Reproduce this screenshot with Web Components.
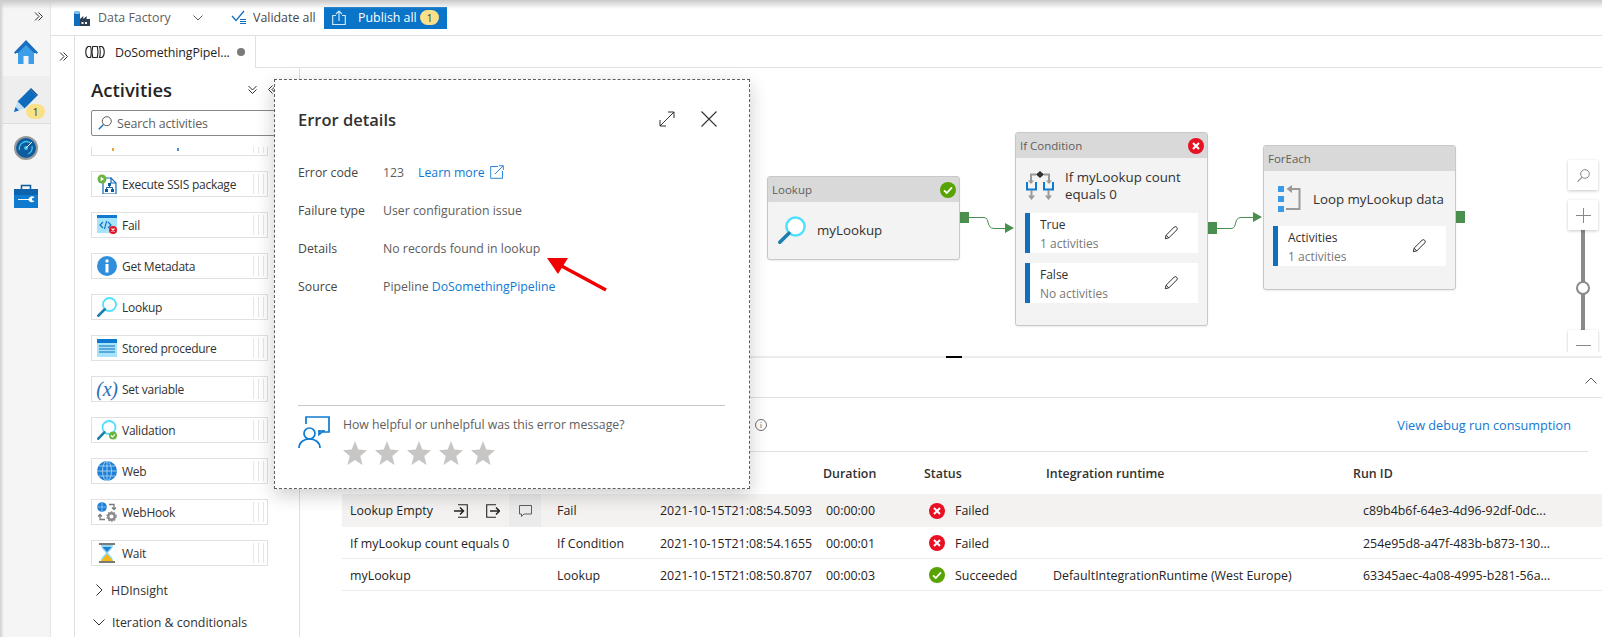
<!DOCTYPE html>
<html lang="en">
<head>
<meta charset="utf-8">
<title>Data Factory</title>
<style>
  html, body { margin: 0; height: 637px; overflow: hidden; background: #fff; }
  body { font-family: "Open Sans", "Noto Sans", sans-serif; font-size: 12.4px; color: #323130; }
</style>
</head>
<body>
<adf-app></adf-app>

<script>
const ICONS = {
  factory: [16, 16, `<path d="M0 2.5C0 .8 6 .8 6 2.5V16H0z" fill="#0f6cbd"/><ellipse cx="3" cy="2.5" rx="3" ry="1.6" fill="#7fc4f0"/><path d="M6 9l3.3-3v3l3.3-3v3H16v7H6z" fill="#2b3f55"/><path d="M7.5 12h2v2h-2zM11 12h2v2h-2z" fill="#fff"/>`],
  validate: [15, 15, `<path d="M1 6l4 4.5L13 1" fill="none" stroke="#0f6cbd" stroke-width="1.2"/><path d="M9 9.5h6M9 11.5h6M9 13.5h6" stroke="#0f6cbd" stroke-width="1.1"/>`],
  upload: [14, 15, `<path d="M4 5.5H.7v9h12.6v-9H10" fill="none" stroke="#cfe6f8" stroke-width="1.2"/><path d="M7 11V1M4 4l3-3 3 3" fill="none" stroke="#cfe6f8" stroke-width="1.2"/>`],
  home: [24, 24, `<path d="M4 12L12 4l8 8v12h-5.5v-8h-5v8H4z" fill="#3f9ee8"/><path d="M12 0L0 12.5l1.5 1.5L12 3.5 22.5 14l1.5-1.5z" fill="#1a6fbe"/><path d="M12 2L1 13l3 0 8-8 8 8h3z" fill="#1a6fbe"/>`],
  pencil: [24, 24, `<path d="M3.500 13.500L16 1l7 7L10.500 20.500z" fill="#0f6cbd"/><path d="M16 1l1-1 7 7-1 1z" fill="#0a4f8f"/><path d="M3.500 13.500l7 7L0 24z" fill="#bcdcf5"/><path d="M1.500 19l3.500 3.500L0 24z" fill="#0f6cbd"/>`],
  monitor: [24, 24, `<circle cx="12" cy="12" r="12" fill="#9a9a9a"/><circle cx="12" cy="12" r="10" fill="#0e5c9e"/><path d="M5.5 14a7 7 0 0 1 11-7M18 10a6.5 6.5 0 0 1-4 8" fill="none" stroke="#3ec6f2" stroke-width="1.3"/><circle cx="12" cy="12" r="2" fill="#3ec6f2"/><path d="M12 12l6-6" stroke="#fff" stroke-width="1"/>`],
  toolbox: [24, 24, `<path d="M7.5 5V1.5h9V5" fill="none" stroke="#0b5a9e" stroke-width="1.5"/><path d="M0 5h24v19H0z" fill="#0f7bd0"/><path d="M0 5h24v6H0z" fill="#0b64ad"/><path d="M4 15h10.5a3.5 3.5 0 0 1 6-1.5l-2.5.9v1.8l2.5.9a3.5 3.5 0 0 1-6-1.100H4z" fill="#fff"/>`],
  pipeline: [20, 14, `<g fill="none" stroke="#252423" stroke-width="1.1"><path d="M3 1.5h2.5c1 2 1 9 0 11H3c-3-2-3-9 0-11z"/><path d="M7.7 1.5h4.6c.8 3 .8 8 0 11H7.7c-.8-3-.8-8 0-11z"/><path d="M14.5 1.5H17c3 2 3 9 0 11h-2.5c1-2 1-9 0-11z"/></g>`],
  search: [14, 14, `<circle cx="8.8" cy="5.2" r="4.5" fill="none" stroke="#605e5c" stroke-width="1"/><path d="M5.5 8.5L.8 13.2" stroke="#0f6cbd" stroke-width="1.3"/>`],
  ssis: [20, 20, `<path d="M6 4h8l5 5v11H6z" fill="#fff" stroke="#0f6cbd" stroke-width="1.2"/><path d="M14 3.5V9h5" fill="none" stroke="#0f6cbd" stroke-width="1.2"/><path d="M11 9h3v3h-3zM8 15h3v3H8zM14 15h3v3h-3z" fill="#0b5a9e"/><path d="M12.5 12v1.5h-3V15M12.5 13.5h3V15" fill="none" stroke="#0b5a9e"/><circle cx="5" cy="5" r="4.5" fill="#6cb33f"/><path d="M3.7 2.8L7 5 3.7 7.2z" fill="#fff"/>`],
  fail: [20, 20, `<path d="M0 2h20v16H0z" fill="#a5e4fa"/><path d="M0 0h20v3H0z" fill="#0f7bd0"/><path d="M6 7l-3 3 3 3M11 7l3 3-3 3M9.7 6L7.5 14" fill="none" stroke="#0f6cbd" stroke-width="1.1"/><circle cx="16" cy="15" r="4" fill="#e81123"/><path d="M14.5 13.5l3 3m0-3l-3 3" stroke="#fff" stroke-width="1.1"/>`],
  info: [20, 20, `<circle cx="10" cy="10" r="10" fill="#2f8fdc"/><circle cx="10" cy="5" r="1.7" fill="#fff"/><path d="M8.5 8h3v8.5h-3z" fill="#fff"/>`],
  lookup: [20, 20, `<circle cx="12.5" cy="7.5" r="6.5" fill="#fff" stroke="#50e0ff" stroke-width="1.8"/><path d="M7.8 12.3L1.3 18.7" stroke="#1c7fae" stroke-width="2.6" stroke-linecap="round"/>`],
  stored: [20, 20, `<path d="M0 3h20v16H0z" fill="#a5e4fa"/><path d="M0 1h20v4H0z" fill="#0f7bd0"/><path d="M2 8h16M2 11h16M2 14h16" stroke="#0f6cbd" stroke-width="1.1"/>`],
  validation: [20, 20, `<circle cx="12" cy="7.5" r="6.5" fill="#fff" stroke="#50e0ff" stroke-width="1.8"/><path d="M7.3 12.3L1.3 18.7" stroke="#1c7fae" stroke-width="2.6" stroke-linecap="round"/><circle cx="16" cy="15.5" r="4" fill="#6cb33f"/><path d="M14 15.5l1.5 1.5 2.5-2.7" fill="none" stroke="#fff" stroke-width="1.1"/>`],
  web: [20, 20, `<circle cx="10" cy="10" r="10" fill="#1f7fd6"/><g fill="none" stroke="#a8d4f5" stroke-width=".9"><ellipse cx="10" cy="10" rx="4.5" ry="9.8"/><path d="M10 0v20M0 10h20M1.5 5h17M1.5 15h17"/></g>`],
  webhook: [20, 20, `<circle cx="5" cy="5" r="4.8" fill="#1f7fd6"/><path d="M.5 5h9M5 .5v9" stroke="#a8d4f5" stroke-width=".7"/><path d="M12 2.5h5V7M15 5.5l2 2 2-2M8 17.5H3V13M1 14.5l2-2 2 2" fill="none" stroke="#7a7a7a" stroke-width="1.3"/><circle cx="14.5" cy="14.5" r="3.3" fill="none" stroke="#8a8a8a" stroke-width="2.4"/><circle cx="14.5" cy="14.5" r="4.7" fill="none" stroke="#8a8a8a" stroke-width="1.2" stroke-dasharray="1.5 1.5"/>`],
  wait: [16, 20, `<path d="M0 0h16v2H0zM0 18h16v2H0z" fill="#7a7a7a"/><path d="M2 2h12c0 4-4 6-5 8 1 2 5 4 5 8H2c0-4 4-6 5-8-1-2-5-4-5-8z" fill="#8fd8f5"/><path d="M8 11l6 7H2z" fill="#f8b912"/><path d="M3.5 4h9L8 9z" fill="#1f7fd6"/>`],
  ifcond: [28, 30, `<path d="M14 0l4 3.5-4 3.5-4-3.5z" fill="#323130"/><g fill="none" stroke="#9a9a9a" stroke-width="2"><path d="M10 3.5H5V12M18 3.5h5V12"/></g><path d="M2 9.5L5 13l3-3.5zM20 9.5l3 3.5 3-3.5z" fill="#9a9a9a"/><g fill="none" stroke="#0f7bd0" stroke-width="2"><path d="M1 11v7.5h9V11M18 11v7.5h9V11"/></g><path d="M5.5 19v6M22.5 19v6" stroke="#9a9a9a" stroke-width="2"/><path d="M2 24.5L5.5 29 9 24.5zM19 24.5l3.5 4.5 3.5-4.5z" fill="#9a9a9a"/>`],
  foreach: [28, 28, `<path d="M4 1h6v6H4zM4 11h6v6H4zM4 21h6v6H4z" fill="#3a9bea"/><path d="M17 4h8.5v20H12" fill="none" stroke="#9a9a9a" stroke-width="2"/><path d="M18 0l-5.5 4 5.5 4z" fill="#9a9a9a"/>`],
  edit: [14, 14, `<path d="M1.3 12.7l.8-3.5L10 1.3a1.7 1.7 0 0 1 2.7 2.7l-7.9 7.9z" fill="none" stroke="#323130" stroke-width="1"/><path d="M2.1 9.2l2.7 2.7" stroke="#323130" stroke-width="1"/>`],
  expand: [16, 16, `<path d="M1 15L15 1M9 1h6v6M1 9v6h6" fill="none" stroke="#323130" stroke-width="1"/>`],
  close: [16, 16, `<path d="M.5.5l15 15m0-15l-15 15" stroke="#323130" stroke-width="1.1"/>`],
  external: [14, 14, `<path d="M8 1.5H.7v11.8h11.8V6" fill="none" stroke="#2b88d8" stroke-width="1"/><path d="M5 9l8-8M9 .7h4.3V5" fill="none" stroke="#2b88d8" stroke-width="1"/>`],
  feedback: [32, 32, `<g fill="none" stroke="#0f7bd0" stroke-width="1.7"><path d="M8 8V1h23v15h-7l-3 2.5V14"/><path d="M27 15l-6 0"/><circle cx="11.5" cy="17.5" r="5.5"/><path d="M1 32c0-12 21-12 21 0"/></g>`],
  enter: [14, 14, `<path d="M4 .7h9.3v12.6H4" fill="none" stroke="#252423" stroke-width="1.1"/><path d="M0 7h9M6 3.5L9.5 7 6 10.5" fill="none" stroke="#252423" stroke-width="1.5"/>`],
  leave: [14, 14, `<path d="M10 .7H.7v12.6H10" fill="none" stroke="#252423" stroke-width="1.1"/><path d="M4 7h9M10 3.5L13.5 7 10 10.5" fill="none" stroke="#252423" stroke-width="1.5"/>`],
  comment: [13, 12, `<path d="M.5.5h12v8.5H5L2.5 11.5V9H.5z" fill="none" stroke="#605e5c" stroke-width="1"/>`],
  infoLine: [12, 12, `<circle cx="6" cy="6" r="5.5" fill="none" stroke="#605e5c" stroke-width=".9"/><path d="M6 5v4M6 3v1" stroke="#b08a55" stroke-width="1"/>`],
  magnify: [13, 13, `<circle cx="8" cy="5" r="4.3" fill="none" stroke="#8a8886" stroke-width="1"/><path d="M5 8.3L.6 12.6" stroke="#8a8886" stroke-width="1.1"/>`],
  plus: [15, 15, `<path d="M7.5 0v15M0 7.5h15" stroke="#8a8886" stroke-width="1"/>`],
  minus: [15, 1, `<path d="M0 .5h15" stroke="#8a8886" stroke-width="1"/>`],
  ok: [16, 16, `<circle cx="8" cy="8" r="8" fill="#57a300"/><path d="M4 8.3l2.8 2.7 5.2-5.600" fill="none" stroke="#fff" stroke-width="1.8"/>`],
  failed: [16, 16, `<circle cx="8" cy="8" r="8" fill="#e81123"/><path d="M5 5l6 6m0-6l-6 6" stroke="#fff" stroke-width="2"/>`],
  star: [24, 24, `<path d="M12 0l3.3 8.6 8.7.6-6.7 5.9 2.2 8.9L12 18.900l-7.500 5.100 2.200-8.900L0 9.200l8.700-.6z" fill="#c8c6c4"/>`],
  chevRight: [9, 9, `<path d="M1 .5l4 4-4 4M4.5.5l4 4-4 4" fill="none" stroke="#323130" stroke-width="1"/>`],
  chevDown2: [9, 9, `<path d="M.5 1l4 4 4-4M.5 4.5l4 4 4-4" fill="none" stroke="#323130" stroke-width="1"/>`],
  chevLeft2: [9, 9, `<path d="M8 .5l-4 4 4 4M4.5.5l-4 4 4 4" fill="none" stroke="#323130" stroke-width="1"/>`],
  down: [10, 6, `<path d="M.5.5L5 5 9.5.5" fill="none" stroke="#605e5c" stroke-width="1"/>`],
  downBig: [12, 7, `<path d="M.5.5L6 6 11.5.5" fill="none" stroke="#323130" stroke-width="1"/>`],
  right: [7, 12, `<path d="M.5.5L6 6 .5 11.5" fill="none" stroke="#323130" stroke-width="1"/>`],
  up: [12, 7, `<path d="M.5 6.5L6 1l5.5 5.5" fill="none" stroke="#605e5c" stroke-width="1"/>`],
};

class AdfIcon extends HTMLElement {
  connectedCallback() {
    const [w, h, body] = ICONS[this.getAttribute('name')];
    const width = this.getAttribute('size') || w;
    const height = width * h / w;
    this.attachShadow({ mode: 'open' });
    this.shadowRoot.innerHTML = `
      <style>:host { display: inline-flex; flex: none; } svg { display: block; }</style>
      <svg width="${width}" height="${height}" viewBox="0 0 ${w} ${h}">${body}</svg>`;
  }
}

class AdfBadge extends HTMLElement {
  constructor() {
    super();
    this.attachShadow({ mode: 'open' });
    this.shadowRoot.innerHTML = `
      <style>
        :host {
          display: inline-flex;
          align-items: center;
          justify-content: center;
          width: 19px;
          height: 15px;
          border-radius: 8px;
          background: #fbe08a;
          color: #323130;
          font-size: 10px;
        }
      </style>
      <slot></slot>`;
  }
}

class AdfRail extends HTMLElement {
  constructor() {
    super();
    this.attachShadow({ mode: 'open' });
    this.shadowRoot.innerHTML = `
      <style>
        :host {
          display: flex;
          flex-direction: column;
          align-items: flex-end;
          background: #f5f5f5;
          border-right: 1px solid #e6e6e6;
          box-sizing: border-box;
        }
        .toggle { height: 28px; padding: 8px 7px 0 0; box-sizing: border-box; }
        .item {
          position: relative;
          width: 48px;
          height: 48px;
          display: flex;
          align-items: center;
          justify-content: center;
          box-sizing: border-box;
        }
        .item.active { background: #eeeeee; border-bottom: 1px solid #dcdcdc; }
        adf-badge { position: absolute; left: 24px; top: 28px; }
      </style>
      <div class="toggle"><adf-icon name="chevRight"></adf-icon></div>
      <div class="item"><adf-icon name="home"></adf-icon></div>
      <div class="item active"><adf-icon name="pencil"></adf-icon><adf-badge>1</adf-badge></div>
      <div class="item"><adf-icon name="monitor"></adf-icon></div>
      <div class="item"><adf-icon name="toolbox"></adf-icon></div>`;
  }
}

class AdfTopbar extends HTMLElement {
  constructor() {
    super();
    this.attachShadow({ mode: 'open' });
    this.shadowRoot.innerHTML = `
      <style>
        :host {
          display: flex;
          align-items: center;
          height: 36px;
          box-sizing: border-box;
          border-bottom: 1px solid #e1e1e1;
          padding-left: 23px;
          color: #605e5c;
        }
        .name { margin-left: 8px; width: 95px; }
        .check { margin-left: 28px; }
        .validate { margin-left: 7px; color: #484644; width: 71px; }
        .publish {
          display: flex;
          align-items: center;
          width: 123px;
          height: 22px;
          padding-left: 8px;
          box-sizing: border-box;
          background: #0a74c9;
          color: #fff;
          font-weight: 500;
        }
        .publish span { margin-left: 12px; width: 62px; white-space: nowrap; }
      </style>
      <adf-icon name="factory"></adf-icon>
      <span class="name">Data Factory</span>
      <adf-icon name="down"></adf-icon>
      <adf-icon class="check" name="validate"></adf-icon>
      <span class="validate">Validate all</span>
      <div class="publish">
        <adf-icon name="upload"></adf-icon>
        <span>Publish all</span>
        <adf-badge>1</adf-badge>
      </div>`;
  }
}

class AdfTabstrip extends HTMLElement {
  constructor() {
    super();
    this.attachShadow({ mode: 'open' });
    this.shadowRoot.innerHTML = `
      <style>
        :host { display: flex; height: 32px; }
        .tab {
          display: flex;
          align-items: center;
          width: 181px;
          box-sizing: border-box;
          padding-left: 10px;
          border-right: 1px solid #e1e1e1;
          color: #252423;
        }
        .title { margin-left: 10px; width: 122px; white-space: nowrap; letter-spacing: -.1px; }
        .dot { width: 8px; height: 8px; border-radius: 50%; background: #7a7a7a; }
        .rest { flex: 1; border-bottom: 1px solid #e1e1e1; }
      </style>
      <div class="tab">
        <adf-icon name="pipeline"></adf-icon>
        <span class="title">DoSomethingPipel...</span>
        <span class="dot"></span>
      </div>
      <div class="rest"></div>`;
  }
}

class AdfActivity extends HTMLElement {
  constructor() {
    super();
    this.attachShadow({ mode: 'open' });
    this.shadowRoot.innerHTML = `
      <style>
        :host {
          display: flex;
          align-items: center;
          flex: none;
          width: 177px;
          height: 26px;
          box-sizing: border-box;
          border: 1px solid #e1e1e1;
          padding-left: 5px;
          color: #323130;
          white-space: nowrap;
          font-size: 12px;
          letter-spacing: -.25px;
        }
        .icon { width: 20px; display: flex; justify-content: center; margin-right: 5px; }
        .label { flex: 1; }
        .grip { display: flex; gap: 4px; margin-right: 3px; align-self: stretch; padding: 2px 0; box-sizing: border-box; }
        .grip i { width: 1px; background: #e6e6e6; }
      </style>
      <div class="icon"><slot name="icon"></slot></div>
      <div class="label"><slot></slot></div>
      <div class="grip"><i></i><i></i><i></i></div>`;
  }
}

class AdfActivities extends HTMLElement {
  constructor() {
    super();
    this.attachShadow({ mode: 'open' });
    this.shadowRoot.innerHTML = `
      <style>
        :host {
          display: flex;
          flex-direction: column;
          box-sizing: border-box;
          width: 225px;
          border-right: 1px solid #e1e1e1;
          overflow: hidden;
        }
        .head { display: flex; align-items: center; height: 42px; padding-left: 16px; }
        h2 { margin: 0; width: 157px; font-size: 18.5px; font-weight: 600; color: #252423; }
        .head adf-icon + adf-icon { margin-left: 11px; }
        .search {
          display: flex;
          align-items: center;
          height: 26px;
          margin-left: 16px;
          width: 240px;
          flex: none;
          box-sizing: border-box;
          border: 1px solid #8a8886;
          border-radius: 2px;
          padding-left: 6px;
          color: #605e5c;
        }
        .search span { margin-left: 5px; letter-spacing: -.1px; }
        .list {
          flex: 1;
          min-height: 0;
          margin-top: 11px;
          overflow: hidden;
          padding-left: 16px;
          display: flex;
          flex-direction: column;
          gap: 15px;
        }
        .clipped { margin-top: -17px; position: relative; }
        .speck { position: absolute; top: 17px; width: 2px; height: 3px; }
        .group { display: flex; align-items: center; gap: 8px; margin-top: 1px; font-weight: 500; flex: none; height: 16px; }
        .group.open { margin-left: 2px; gap: 7px; }
        .group.first { margin-left: 5px; }
        .var { font-family: "Liberation Serif", serif; font-style: italic; font-size: 20px; color: #2a6fb5; white-space: nowrap; line-height: 20px; }
      </style>
      <div class="head">
        <h2>Activities</h2>
        <adf-icon name="chevDown2"></adf-icon>
        <adf-icon name="chevLeft2"></adf-icon>
      </div>
      <div class="search"><adf-icon name="search"></adf-icon><span>Search activities</span></div>
      <div class="list">
        <adf-activity class="clipped"><i class="speck" style="left:20px;background:#e8a33d"></i><i class="speck" style="left:85px;background:#4a90d9"></i></adf-activity>
        <adf-activity><adf-icon slot="icon" name="ssis"></adf-icon>Execute SSIS package</adf-activity>
        <adf-activity><adf-icon slot="icon" name="fail"></adf-icon>Fail</adf-activity>
        <adf-activity><adf-icon slot="icon" name="info"></adf-icon>Get Metadata</adf-activity>
        <adf-activity><adf-icon slot="icon" name="lookup"></adf-icon>Lookup</adf-activity>
        <adf-activity><adf-icon slot="icon" name="stored"></adf-icon>Stored procedure</adf-activity>
        <adf-activity><span class="var" slot="icon">(x)</span>Set variable</adf-activity>
        <adf-activity><adf-icon slot="icon" name="validation"></adf-icon>Validation</adf-activity>
        <adf-activity><adf-icon slot="icon" name="web"></adf-icon>Web</adf-activity>
        <adf-activity><adf-icon slot="icon" name="webhook"></adf-icon>WebHook</adf-activity>
        <adf-activity><adf-icon slot="icon" name="wait"></adf-icon>Wait</adf-activity>
        <div class="group first"><adf-icon name="right"></adf-icon><span>HDInsight</span></div>
        <div class="group open"><adf-icon name="downBig"></adf-icon><span>Iteration &amp; conditionals</span></div>
      </div>`;
  }
}

class AdfBranch extends HTMLElement {
  constructor() {
    super();
    this.attachShadow({ mode: 'open' });
    this.shadowRoot.innerHTML = `
      <style>
        :host {
          display: flex;
          align-items: center;
          height: 40px;
          background: #fff;
          border-left: 5px solid #106ebe;
          padding: 0 20px 0 10px;
        }
        .text { flex: 1; line-height: 19px; padding-top: 1px; }
        .title { color: #323130; font-size: 12px; }
        .sub { color: #7a7876; font-size: 12px; }
      </style>
      <div class="text">
        <div class="title"><slot></slot></div>
        <div class="sub"><slot name="sub"></slot></div>
      </div>
      <adf-icon name="edit"></adf-icon>`;
  }
}

class AdfNode extends HTMLElement {
  constructor() {
    super();
    this.attachShadow({ mode: 'open' });
  }

  connectedCallback() {
    const label = this.getAttribute('label');
    const status = this.getAttribute('status');
    this.style.left = this.getAttribute('x') + 'px';
    this.style.top = this.getAttribute('y') + 'px';
    this.style.height = this.getAttribute('h') + 'px';
    this.shadowRoot.innerHTML = `
      <style>
        :host {
          position: absolute;
          width: 193px;
          box-sizing: border-box;
          background: #f3f3f3;
          border: 1px solid #c8c8c8;
          border-radius: 3px;
          box-shadow: 0 1px 2px rgba(0,0,0,.08);
          overflow: hidden;
        }
        .head {
          display: flex;
          align-items: center;
          justify-content: space-between;
          height: 25px;
          padding: 0 3px 0 4px;
          background: #d9d9d9;
          color: #605e5c;
          font-size: 11.5px;
        }
        .main {
          display: flex;
          align-items: center;
          gap: 11px;
          height: 55px;
          padding: 1px 0 0 10px;
          box-sizing: border-box;
          font-size: 13.3px;
          color: #323130;
          line-height: 17px;
          white-space: nowrap;
        }
        .icon { width: 28px; display: flex; justify-content: center; }
        .branches { display: flex; flex-direction: column; gap: 10px; margin: 0 9px; }
      </style>
      <div class="head"><span>${label}</span>${status ? `<adf-icon name="${status}"></adf-icon>` : ''}</div>
      <div class="main"><div class="icon"><slot name="icon"></slot></div><div><slot name="title"></slot></div></div>
      <div class="branches"><slot></slot></div>`;
  }
}

class AdfZoom extends HTMLElement {
  constructor() {
    super();
    this.attachShadow({ mode: 'open' });
    this.shadowRoot.innerHTML = `
      <style>
        :host {
          position: absolute;
          right: 2px;
          top: 90px;
          width: 34px;
          height: 194px;
          padding-top: 2px;
          box-sizing: border-box;
          display: flex;
          flex-direction: column;
          align-items: center;
          overflow: hidden;
        }
        .btn {
          flex: none;
          width: 30px;
          height: 30px;
          background: #fff;
          box-shadow: 0 1px 3px rgba(0,0,0,.22);
          display: flex;
          align-items: center;
          justify-content: center;
          position: relative;
          z-index: 1;
        }
        .btn.top { margin-bottom: 10px; }
        .track {
          flex: none;
          position: relative;
          width: 4px;
          height: 100px;
          background: #8a8a8a;
        }
        .thumb {
          position: absolute;
          left: -5px;
          top: 51px;
          width: 10px;
          height: 10px;
          border: 2px solid #8a8a8a;
          border-radius: 50%;
          background: #fff;
        }
      </style>
      <div class="btn top"><adf-icon name="magnify"></adf-icon></div>
      <div class="btn"><adf-icon name="plus"></adf-icon></div>
      <div class="track"><div class="thumb"></div></div>
      <div class="btn"><adf-icon name="minus"></adf-icon></div>`;
  }
}

class AdfCanvas extends HTMLElement {
  constructor() {
    super();
    this.attachShadow({ mode: 'open' });
    this.shadowRoot.innerHTML = `
      <style>
        :host { display: block; position: relative; height: 288px; overflow: hidden; }
        svg { position: absolute; left: 0; top: 0; }
      </style>
      <svg width="1302" height="288" viewBox="300 68 1302 288">
        <g fill="#4a8f50">
          <rect x="960" y="212" width="9" height="11"/>
          <rect x="1208" y="222" width="9" height="12"/>
          <rect x="1456" y="211" width="9" height="12"/>
          <path d="M1005 223l9 5-9 5zM1253 212l9 5-9 5z"/>
        </g>
        <g fill="none" stroke="#4a8f50" stroke-width="1">
          <path d="M969 217.5h15c6 0 2 11 10 11h11"/>
          <path d="M1217 228.5h14c7 0 2-11 10-11h12"/>
        </g>
      </svg>
      <slot></slot>`;
  }
}

class AdfRunRow extends HTMLElement {
  constructor() {
    super();
    this.attachShadow({ mode: 'open' });
  }

  connectedCallback() {
    const status = this.getAttribute('status');
    const selected = this.hasAttribute('selected');
    const name = this.getAttribute('name');
    this.shadowRoot.innerHTML = `
      <style>
        :host {
          display: grid;
          grid-template-columns: var(--run-cols);
          align-items: center;
          height: 32px;
          padding-top: 1px;
          box-sizing: border-box;
          border-bottom: 1px solid #edebe9;
          color: #252423;
        }
        :host([selected]) { height: 33px; padding-top: 0; background: #f3f2f1; border-bottom: 0; }
        .cell { padding-left: 8px; white-space: nowrap; overflow: hidden; }
        .time { overflow: hidden; width: 158px; }
        .name { display: flex; align-items: center; height: 100%; }
        .name span { width: 104px; }
        .actions { display: flex; align-items: center; align-self: stretch; }
        .actions > adf-icon { margin-right: 18px; }
        .bubble { width: 32px; align-self: stretch; display: flex; align-items: center; justify-content: center; background: #ebebeb; margin-left: -9px; }
        .status { display: flex; align-items: center; gap: 10px; padding-left: 11px; }
        .run { padding-left: 7px; }
        .runtime { padding-left: 7px; }
      </style>
      <div class="cell name">
        <span>${name}</span>
        ${selected ? `<div class="actions"><adf-icon name="enter"></adf-icon><adf-icon name="leave"></adf-icon><div class="bubble"><adf-icon name="comment"></adf-icon></div></div>` : ''}
      </div>
      <div class="cell">${this.getAttribute('type')}</div>
      <div class="cell"><div class="time">${this.getAttribute('start')}</div></div>
      <div class="cell">${this.getAttribute('duration')}</div>
      <div class="cell status"><adf-icon name="${status === 'Failed' ? 'failed' : 'ok'}"></adf-icon><span>${status}</span></div>
      <div class="cell runtime">${this.getAttribute('runtime') || ''}</div>
      <div class="cell run">${this.getAttribute('run')}</div>`;
  }
}

class AdfOutput extends HTMLElement {
  constructor() {
    super();
    this.attachShadow({ mode: 'open' });
    this.shadowRoot.innerHTML = `
      <style>
        :host { display: block; --run-cols: 207px 103px 166px 100px 128px 310px 206px; }
        .sep { position: relative; height: 2px; background: #ececec; }
        .grab { position: absolute; left: 646px; width: 16px; height: 2px; background: #000; }
        .tabs { display: flex; align-items: center; justify-content: flex-end; height: 40px; padding: 6px 5px 0 0; box-sizing: border-box; border-bottom: 1px solid #e1e1e1; }
        .bar {
          display: flex;
          align-items: center;
          height: 54px;
          box-sizing: border-box;
          margin: 0 14px 0 42px;
          border-bottom: 1px solid #e1e1e1;
          padding: 0 17px 0 413px;
        }
        .link { margin-left: auto; color: #0f78d4; font-size: 12.7px; }
        .table { margin-left: 42px; }
        .heads {
          display: grid;
          grid-template-columns: var(--run-cols);
          align-items: center;
          height: 42px;
          font-weight: 600;
          color: #323130;
        }
        .heads span:nth-child(4) { padding-left: 5px; }
        .heads span:nth-child(5) { padding-left: 6px; }
        .heads span:nth-child(7) { margin-left: -3px; }
      </style>
      <div class="sep"><div class="grab"></div></div>
      <div class="tabs"><adf-icon name="up"></adf-icon></div>
      <div class="bar"><adf-icon name="infoLine"></adf-icon><span class="link">View debug run consumption</span></div>
      <div class="table">
        <div class="heads"><span></span><span></span><span></span><span>Duration</span><span>Status</span><span>Integration runtime</span><span>Run ID</span></div>
        <adf-run-row selected name="Lookup Empty" type="Fail" start="2021-10-15T21:08:54.5093" duration="00:00:00" status="Failed" run="c89b4b6f-64e3-4d96-92df-0dc..."></adf-run-row>
        <adf-run-row name="If myLookup count equals 0" type="If Condition" start="2021-10-15T21:08:54.1655" duration="00:00:01" status="Failed" run="254e95d8-a47f-483b-b873-130..."></adf-run-row>
        <adf-run-row name="myLookup" type="Lookup" start="2021-10-15T21:08:50.8707" duration="00:00:03" status="Succeeded" runtime="DefaultIntegrationRuntime (West Europe)" run="63345aec-4a08-4995-b281-56a..."></adf-run-row>
      </div>`;
  }
}

class AdfErrorPopup extends HTMLElement {
  constructor() {
    super();
    this.attachShadow({ mode: 'open' });
    this.shadowRoot.innerHTML = `
      <style>
        :host {
          position: absolute;
          left: 274px;
          top: 79px;
          width: 476px;
          height: 410px;
          box-sizing: border-box;
          display: flex;
          flex-direction: column;
          background: #fff;
          border: 1px dashed #605e5c;
          box-shadow: 0 6px 18px rgba(0,0,0,.2);
          color: #605e5c;
          font-size: 12.3px;
        }
        .head { display: flex; align-items: center; height: 32px; margin: 23px 32px 0 23px; gap: 26px; }
        h2 { flex: 1; margin: 0; font-size: 16.5px; font-weight: 600; color: #323130; }
        .rows { display: grid; grid-template-columns: 85px 1fr; grid-auto-rows: 38px; align-items: center; margin: 18px 0 0 23px; }
        .key { color: #484644; }
        .val { display: flex; align-items: center; white-space: pre; }
        a { color: #0f78d4; text-decoration: none; }
        .code { width: 35px; }
        .val adf-icon { margin-left: 5px; }
        .foot {
          display: flex;
          gap: 13px;
          margin: auto 24px 23px 23px;
          padding-top: 10px;
          border-top: 1px solid #c8c6c4;
        }
        .ask { line-height: 18px; letter-spacing: -.05px; }
        .stars { display: flex; gap: 8px; margin-top: 7px; }
        .arrow { position: absolute; left: 0; top: 0; pointer-events: none; }
      </style>
      <div class="head">
        <h2>Error details</h2>
        <adf-icon name="expand"></adf-icon>
        <adf-icon name="close"></adf-icon>
      </div>
      <div class="rows">
        <span class="key">Error code</span><span class="val"><span class="code">123</span><a>Learn more</a><adf-icon name="external"></adf-icon></span>
        <span class="key">Failure type</span><span class="val">User configuration issue</span>
        <span class="key">Details</span><span class="val">No records found in lookup</span>
        <span class="key">Source</span><span class="val">Pipeline <a>DoSomethingPipeline</a></span>
      </div>
      <div class="foot">
        <adf-icon name="feedback"></adf-icon>
        <div>
          <div class="ask">How helpful or unhelpful was this error message?</div>
          <div class="stars">
            <adf-icon name="star"></adf-icon><adf-icon name="star"></adf-icon><adf-icon name="star"></adf-icon><adf-icon name="star"></adf-icon><adf-icon name="star"></adf-icon>
          </div>
        </div>
      </div>
      <svg class="arrow" width="474" height="408" viewBox="275 80 474 408">
        <path d="M606 290L556 263" stroke="#f00000" stroke-width="3.5"/>
        <path d="M547 258l21 0-10 16z" fill="#f00000"/>
      </svg>`;
  }
}

class AdfApp extends HTMLElement {
  constructor() {
    super();
    this.attachShadow({ mode: 'open' });
    this.shadowRoot.innerHTML = `
      <style>
        :host {
          display: grid;
          position: relative;
          grid-template-columns: 51px 1fr;
          height: 637px;
          overflow: hidden;
        }
        :host::before {
          content: "";
          position: absolute;
          inset: 0 0 auto 0;
          height: 9px;
          background: linear-gradient(#c9c9c9, rgba(255,255,255,0));
          z-index: 3;
        }
        :host::after {
          content: "";
          position: absolute;
          inset: 0 auto 0 0;
          width: 4px;
          background: linear-gradient(90deg, #cfcfcf, rgba(255,255,255,0));
          z-index: 3;
        }
        .right { display: flex; flex-direction: column; min-width: 0; }
        .work { flex: 1; min-height: 0; display: grid; grid-template-columns: 24px 1fr; }
        .toggle { border-right: 1px solid #e1e1e1; padding: 12px 0 0 8px; box-sizing: border-box; }
        .pane { display: flex; flex-direction: column; min-width: 0; min-height: 0; }
        .split { flex: 1; min-height: 0; display: flex; }
        .main { flex: 1; min-width: 0; }
      </style>
      <adf-rail></adf-rail>
      <div class="right">
        <adf-topbar></adf-topbar>
        <div class="work">
          <div class="toggle"><adf-icon name="chevRight"></adf-icon></div>
          <div class="pane">
            <adf-tabstrip></adf-tabstrip>
            <div class="split">
              <adf-activities></adf-activities>
              <div class="main">
                <adf-canvas>
                  <adf-node label="Lookup" status="ok" x="467" y="108" h="84">
                    <adf-icon slot="icon" name="lookup" size="28"></adf-icon>
                    <span slot="title">myLookup</span>
                  </adf-node>
                  <adf-node label="If Condition" status="failed" x="715" y="64" h="194">
                    <adf-icon slot="icon" name="ifcond"></adf-icon>
                    <span slot="title">If myLookup count<br>equals 0</span>
                    <adf-branch>True<span slot="sub">1 activities</span></adf-branch>
                    <adf-branch>False<span slot="sub">No activities</span></adf-branch>
                  </adf-node>
                  <adf-node label="ForEach" x="963" y="77" h="145">
                    <adf-icon slot="icon" name="foreach"></adf-icon>
                    <span slot="title">Loop myLookup data</span>
                    <adf-branch>Activities<span slot="sub">1 activities</span></adf-branch>
                  </adf-node>
                  <adf-zoom></adf-zoom>
                </adf-canvas>
                <adf-output></adf-output>
              </div>
            </div>
          </div>
        </div>
      </div>
      <adf-error-popup></adf-error-popup>`;
  }
}

customElements.define('adf-icon', AdfIcon);
customElements.define('adf-badge', AdfBadge);
customElements.define('adf-rail', AdfRail);
customElements.define('adf-topbar', AdfTopbar);
customElements.define('adf-tabstrip', AdfTabstrip);
customElements.define('adf-activity', AdfActivity);
customElements.define('adf-activities', AdfActivities);
customElements.define('adf-branch', AdfBranch);
customElements.define('adf-node', AdfNode);
customElements.define('adf-zoom', AdfZoom);
customElements.define('adf-canvas', AdfCanvas);
customElements.define('adf-run-row', AdfRunRow);
customElements.define('adf-output', AdfOutput);
customElements.define('adf-error-popup', AdfErrorPopup);
customElements.define('adf-app', AdfApp);
</script>
</body>
</html>
